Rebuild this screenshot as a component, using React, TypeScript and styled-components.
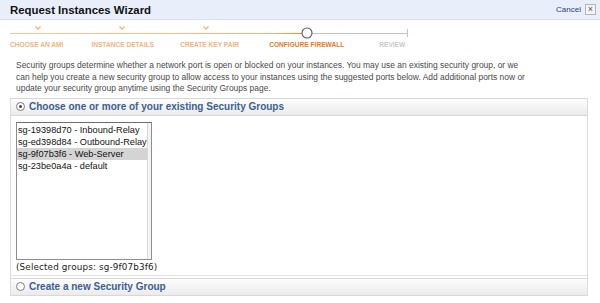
import React, { useState } from "react";
import styled, { createGlobalStyle } from "styled-components";

type Step = {
  label: string;
  state: "done" | "current" | "todo";
  gap: number;
};

const steps: Step[] = [
  { label: "Choose an AMI", state: "done", gap: 0 },
  { label: "Instance Details", state: "done", gap: 28 },
  { label: "Create Key Pair", state: "done", gap: 26 },
  { label: "Configure Firewall", state: "current", gap: 30 },
  { label: "Review", state: "todo", gap: 35 },
];

const groups = [
  { id: "sg-19398d70", name: "Inbound-Relay" },
  { id: "sg-ed398d84", name: "Outbound-Relay" },
  { id: "sg-9f07b3f6", name: "Web-Server" },
  { id: "sg-23be0a4a", name: "default" },
];

const App = () => {
  const [selected, setSelected] = useState("sg-9f07b3f6");
  const [mode, setMode] = useState<"existing" | "new">("existing");

  return (
    <>
      <GlobalStyle />
      <Wizard>
        <Header>
          <Title>Request Instances Wizard</Title>
          <CancelLink>
            Cancel
            <CloseBox>×</CloseBox>
          </CancelLink>
        </Header>

        <Progress>
          <Track width="600" height="18" viewBox="0 0 600 18">
            <defs>
              <linearGradient id="done" x1="0" x2="1" y1="0" y2="0">
                <stop offset="0" stopColor="#f6c79c" />
                <stop offset="0.9" stopColor="#f4b47c" />
                <stop offset="1" stopColor="#ec8a35" />
              </linearGradient>
            </defs>
            <rect x="10" y="12" width="292" height="1" fill="url(#done)" />
            <rect x="312" y="12" width="95" height="1" fill="#c4c4c4" />
            <rect x="407" y="8" width="1" height="8" fill="#c4c4c4" />
            {[38, 122, 206].map((x) => (
              <path
                key={x}
                d={`M${x - 2.5} 5.5 L${x} 8 L${x + 2.5} 5.5`}
                stroke="#f2b27a"
                strokeWidth="1.3"
                fill="none"
              />
            ))}
            <circle cx="307" cy="12" r="5" fill="#fff" stroke="#5a5a5a" strokeWidth="1.1" />
          </Track>
          <StepRow>
            {steps.map((s) => (
              <StepLabel key={s.label} $gap={s.gap} $state={s.state}>
                {s.label}
              </StepLabel>
            ))}
          </StepRow>
        </Progress>

        <Intro>
          Security groups determine whether a network port is open or blocked on your instances. You may use an existing
          security group, or we can help you create a new security group to allow access to your instances using the
          suggested ports below. Add additional ports now or update your security group anytime using the Security
          Groups page.
        </Intro>

        <Panel>
          <PanelHeader onClick={() => setMode("existing")}>
            <Radio $checked={mode === "existing"} />
            Choose one or more of your existing Security Groups
          </PanelHeader>
          <PanelBody>
            <ListBox>
              <ListItems>
                {groups.map((g) => (
                  <ListItem key={g.id} $selected={g.id === selected} onClick={() => setSelected(g.id)}>
                    {g.id} - {g.name}
                  </ListItem>
                ))}
              </ListItems>
              <ScrollBar />
            </ListBox>
            <SelectedNote>(Selected groups: {selected})</SelectedNote>
          </PanelBody>
          <PanelHeader $spaced onClick={() => setMode("new")}>
            <Radio $checked={mode === "new"} />
            Create a new Security Group
          </PanelHeader>
        </Panel>
      </Wizard>
    </>
  );
};

const GlobalStyle = createGlobalStyle`
  body {
    margin: 0;
    background: #fff;
    font-family: "Liberation Sans", Arial, sans-serif;
  }
`;

const Wizard = styled.div`
  width: 600px;
  height: 303px;
  overflow: hidden;
  background: #fff;
`;

const Header = styled.div`
  height: 19px;
  display: flex;
  align-items: center;
  justify-content: space-between;
  padding: 0 4px 0 10px;
  background: #e8effa;
  border-bottom: 1px solid #d6e0ee;
`;

const Title = styled.h1`
  margin: 0;
  font-size: 11.4px;
  font-weight: bold;
  color: #111;
`;

const CancelLink = styled.a`
  display: flex;
  align-items: center;
  gap: 4px;
  font-size: 8px;
  color: #27407a;
  cursor: pointer;
`;

const CloseBox = styled.span`
  width: 9px;
  height: 9px;
  display: flex;
  align-items: center;
  justify-content: center;
  border: 1px solid #b5b5b5;
  background: #f4f4f4;
  color: #555;
  font-size: 9px;
  line-height: 1;
`;

const Progress = styled.div`
  height: 38px;
  display: flex;
  flex-direction: column;
`;

const Track = styled.svg`
  display: block;
  margin-top: 1px;
`;

const StepRow = styled.div`
  display: flex;
  padding: 2px 0 0 10px;
`;

const StepLabel = styled.span<{ $gap: number; $state: string }>`
  margin-left: ${(p) => p.$gap}px;
  font-size: 6.6px;
  font-weight: bold;
  text-transform: uppercase;
  color: ${(p) => (p.$state === "current" ? "#e47a1f" : p.$state === "done" ? "#f2b37d" : "#c9c9c9")};
`;

const Intro = styled.p`
  width: 513px;
  margin: 0;
  padding: 2px 0 0 16px;
  font-size: 8.45px;
  line-height: 11.5px;
  color: #4a4a4a;
`;

const Panel = styled.div`
  margin: 3px 12px 0 10px;
  border-right: 1px solid #dcdcdc;
  border-left: 1px solid #dcdcdc;
`;

const PanelHeader = styled.div<{ $spaced?: boolean }>`
  height: 16px;
  display: flex;
  align-items: center;
  gap: 4px;
  margin-top: ${(p) => (p.$spaced ? "2px" : "0")};
  padding-left: 5px;
  background: linear-gradient(#fdfdfd, #ebebeb);
  border-top: 1px solid #d8d8d8;
  border-bottom: 1px solid #d8d8d8;
  font-size: 10px;
  font-weight: bold;
  color: #3b5f93;
  cursor: pointer;
`;

const Radio = styled.span<{ $checked: boolean }>`
  width: 7px;
  height: 7px;
  border-radius: 50%;
  border: 1px solid #7d7d7d;
  background: #fff;
  display: flex;
  align-items: center;
  justify-content: center;

  &::after {
    content: "";
    width: 3px;
    height: 3px;
    border-radius: 50%;
    background: ${(p) => (p.$checked ? "#444" : "transparent")};
  }
`;

const PanelBody = styled.div`
  padding: 6px 5px 3px 5px;
  background: #fff;
  border-bottom: 1px solid #e2e2e2;
`;

const ListBox = styled.div`
  width: 134px;
  height: 136px;
  display: flex;
  border: 1px solid #8e8e8e;
  border-top-color: #6d6d6d;
`;

const ListItems = styled.div`
  flex: 1;
  padding-top: 1px;
`;

const ListItem = styled.div<{ $selected: boolean }>`
  height: 12px;
  line-height: 12px;
  padding-left: 1px;
  font-size: 9.2px;
  color: #111;
  white-space: nowrap;
  background: ${(p) => (p.$selected ? "#d4d4d4" : "transparent")};
  cursor: default;
`;

const ScrollBar = styled.div`
  width: 6px;
  border-left: 1px solid #d8d8d8;
  background: #f4f4f4;
`;

const SelectedNote = styled.div`
  margin-top: 2px;
  font-family: "DejaVu Sans", Verdana, sans-serif;
  font-size: 8.8px;
  letter-spacing: 0.15px;
  color: #222;
`;

export default App;
